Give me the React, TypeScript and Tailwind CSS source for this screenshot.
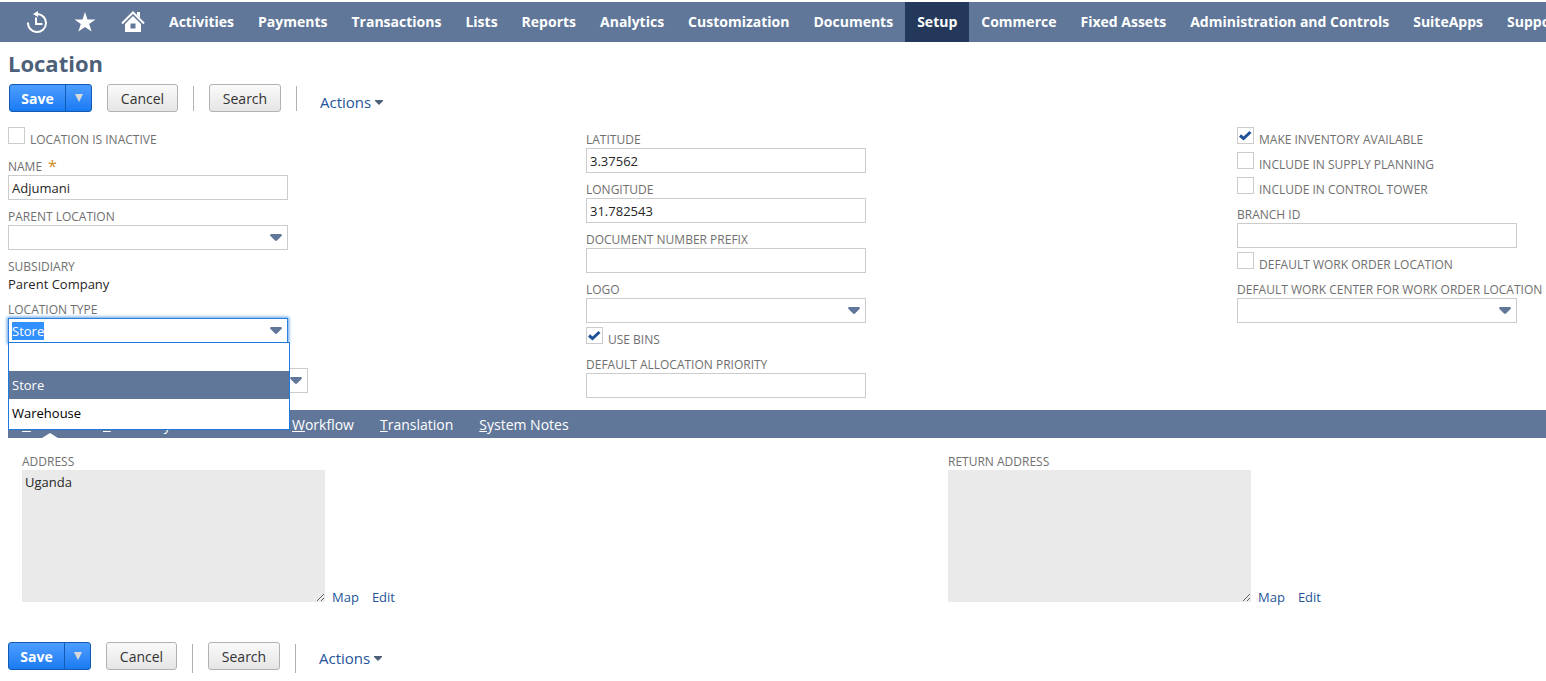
import React, { useEffect, useRef, useState } from 'react';

const NAV_ITEMS = [
    'Activities',
    'Payments',
    'Transactions',
    'Lists',
    'Reports',
    'Analytics',
    'Customization',
    'Documents',
    'Setup',
    'Commerce',
    'Fixed Assets',
    'Administration and Controls',
    'SuiteApps',
    'Support',
];

const TABS = [
    { label: 'Address', width: 'w-[55px]' },
    { label: 'Subsidiary Restrictions', width: 'w-[163px]' },
    { label: 'Workflow', width: '' },
    { label: 'Translation', width: '' },
    { label: 'System Notes', width: '' },
];

const HistoryIcon = () => (
    <svg width="22" height="22" viewBox="0 0 22 22" fill="none" stroke="#fff" strokeWidth="2">
        <path d="M2 11.500a9 9 0 1 0 9.500-8.500" />
        <path d="M7 3 12 0v6z" fill="#fff" stroke="none" />
        <path d="M10 6.500V13H16.500" />
    </svg>
);

const StarIcon = () => (
    <svg width="22" height="22" viewBox="0 0 22 22" fill="#fff">
        <path d="M11 1l2.500 7.400h8l-6.300 4.600 2.400 7.500L11 16l-6.600 4.500 2.400-7.500L.5 8.400h8z" />
    </svg>
);

const HomeIcon = () => (
    <svg width="24" height="22" viewBox="0 0 24 22">
        <path d="M1 12.500 12 1.500l11 11" fill="none" stroke="#fff" strokeWidth="2" />
        <path d="M16 1h3v6l-3-3z" fill="#fff" />
        <path d="M12 5l8 8v8H4v-8zM9.500 12.500v5h5v-5z" fill="#fff" fillRule="evenodd" />
    </svg>
);

const DropArrow = () => (
    <svg width="12" height="8" viewBox="0 0 12 8" className="pointer-events-none absolute right-1.5 top-[9px]" fill="#607799">
        <path d="M1 0h10q1.500.8.5 2L7 6.500q-1 .8-2 0L.5 2Q-.5.8 1 0z" />
    </svg>
);

interface FieldProps {
    id: string;
    label: string;
    required?: boolean;
    children: React.ReactNode;
}

const Field: React.FC<FieldProps> = ({ id, label, required, children }) => (
    <div className="mb-1">
        <label
            htmlFor={id}
            className={`flex items-end whitespace-nowrap text-xs leading-4 text-[#6f6f6f] ${required ? 'h-[23px]' : 'h-[21px]'}`}
        >
            {label}
            {required && <span className="ml-1.5 text-base leading-[18px] text-[#cf8a1d]">*</span>}
        </label>
        {children}
    </div>
);

const TextField = ({ id, label, value = '', required }: { id: string; label: string; value?: string; required?: boolean }) => (
    <Field id={id} label={label} required={required}>
        <input
            id={id}
            type="text"
            defaultValue={value}
            className="block h-[25px] w-[280px] border border-[#ccc] bg-white px-[3px] text-[13px] text-[#262626] outline-none"
        />
    </Field>
);

const SelectField = ({ id, label, wide }: { id: string; label: string; wide?: boolean }) => (
    <Field id={id} label={label}>
        <div className={`relative ${wide ? 'w-[300px]' : 'w-[280px]'}`}>
            <select id={id} className="block h-[25px] w-full appearance-none border border-[#ccc] bg-white px-[3px] text-[13px] outline-none">
                <option></option>
            </select>
            <DropArrow />
        </div>
    </Field>
);

const CheckField = ({ id, label, checked = false }: { id: string; label: string; checked?: boolean }) => (
    <div className="flex h-[25px] items-start">
        <span className="relative size-[17px]">
            <input
                id={id}
                type="checkbox"
                defaultChecked={checked}
                className="peer block size-[17px] appearance-none border border-[#ccc] bg-white"
            />
            <svg
                width="13"
                height="11"
                viewBox="0 0 13 11"
                className="pointer-events-none absolute left-0.5 top-[3px] hidden peer-checked:block"
                fill="none"
                stroke="#1f5297"
                strokeWidth="3"
            >
                <path d="M1 5.500 4.500 8.500 11.500 2" />
            </svg>
        </span>
        <label htmlFor={id} className="ml-[5px] mt-[5px] whitespace-nowrap text-xs leading-4 text-[#6f6f6f]">
            {label}
        </label>
    </div>
);

const LocationTypeField = () => {
    const inputRef = useRef<HTMLInputElement>(null);
    const [value, setValue] = useState('Store');

    useEffect(() => {
        inputRef.current?.focus({ preventScroll: true });
        inputRef.current?.select();
    }, []);

    return (
        <Field id="locationType" label="LOCATION TYPE">
            <div className="relative w-[280px]">
                <input
                    ref={inputRef}
                    id="locationType"
                    type="text"
                    role="combobox"
                    aria-expanded="true"
                    aria-controls="locationTypeList"
                    value={value}
                    onChange={(e) => setValue(e.target.value)}
                    className="block h-[25px] w-full border border-[#2f80dc] bg-white px-[3px] text-[13px] text-[#262626] shadow-[0_0_3px_1px_#5a9fe8] outline-none selection:bg-[#3390ff] selection:text-white"
                />
                <DropArrow />
                <ul
                    id="locationTypeList"
                    role="listbox"
                    className="absolute left-0 top-6 z-10 w-[282px] border border-[#1f7ae0] bg-white pb-0.5 text-[13px] leading-7 text-black"
                >
                    {['', 'Store', 'Warehouse'].map((option) => (
                        <li
                            key={option}
                            role="option"
                            aria-selected={option === value}
                            onClick={() => setValue(option)}
                            className={`h-7 px-[3px] ${option === value ? 'bg-[#607799] text-white' : ''}`}
                        >
                            {option}
                        </li>
                    ))}
                </ul>
            </div>
        </Field>
    );
};

const grayButton =
    'h-7 rounded-[3px] border border-[#b2b2b2] bg-linear-to-b from-[#fafafa] to-[#e5e5e5] pt-0.5 text-sm font-medium text-[#333]';

const Toolbar = ({ bottom }: { bottom?: boolean }) => (
    <div className={`flex items-start ${bottom ? 'pl-2' : 'pl-[9px]'}`}>
        <div className="flex h-7 w-[83px] rounded-[3px] border border-[#125ab2] bg-linear-to-b from-[#4c9dff] to-[#187bf2] text-sm font-bold text-white">
            <button type="button" className="flex-1 pt-0.5">Save</button>
            <button type="button" aria-label="More save options" className="flex w-[26px] items-center justify-center border-l border-[#125ab2]">
                <svg width="8" height="8" viewBox="0 0 8 8" fill="#d9d9d9">
                    <path d="M0 0h8L4 8z" />
                </svg>
            </button>
        </div>
        <button type="button" className={`ml-[15px] w-[71px] ${grayButton}`}>Cancel</button>
        <span className={`ml-[15px] mt-0.5 w-px bg-[#b2b2b2] ${bottom ? 'h-[29px]' : 'h-[25px]'}`} />
        <button type="button" className={`ml-[15px] w-[72px] ${grayButton}`}>Search</button>
        <span className={`ml-[15px] mt-0.5 w-px bg-[#b2b2b2] ${bottom ? 'h-[29px]' : 'h-[25px]'}`} />
        <button
            type="button"
            className={`-mb-1 ml-[23px] flex items-center gap-1 text-[15px] leading-5 font-medium text-[#255599] ${bottom ? 'mt-1.5' : 'mt-2'}`}
        >
            Actions
            <svg width="8" height="5" viewBox="0 0 8 5" fill="#4d5f79">
                <path d="M0 0h8v1L4 5 0 1z" />
            </svg>
        </button>
    </div>
);

const AddressBox = ({ id, label, value = '' }: { id: string; label: string; value?: string }) => (
    <div>
        <label htmlFor={id} className="block pt-0.5 text-xs leading-4 text-[#6f6f6f]">{label}</label>
        <div className="flex items-end text-[13px] leading-[18px] text-[#255599]">
            <textarea
                id={id}
                readOnly
                defaultValue={value}
                className="block h-[132px] w-[303px] bg-[#eaeaea] px-[3px] py-[3px] text-[#262626] outline-none"
            />
            <a href="#map" className="ml-[7px] -mb-1">Map</a>
            <a href="#edit" className="ml-[13px] -mb-1">Edit</a>
        </div>
    </div>
);

export default function App() {
    return (
        <div className="overflow-hidden bg-white pt-0.5 pb-2 font-['Open_Sans',sans-serif]">
            {/* Main navigation */}
            <nav className="flex h-10 items-stretch overflow-hidden bg-[#607799] pl-[13px] text-sm font-bold text-white">
                <a href="#recent" aria-label="Recent records" className="flex w-12 shrink-0 items-center justify-center"><HistoryIcon /></a>
                <a href="#shortcuts" aria-label="Shortcuts" className="flex w-12 shrink-0 items-center justify-center"><StarIcon /></a>
                <a href="#home" aria-label="Home" className="flex w-12 shrink-0 items-center justify-center"><HomeIcon /></a>
                {NAV_ITEMS.map((item) => (
                    <a
                        key={item}
                        href="#nav"
                        className={`flex shrink-0 items-center whitespace-nowrap px-3 ${item === 'Setup' ? 'bg-[#24385b]' : ''}`}
                    >
                        {item}
                    </a>
                ))}
            </nav>

            <h1 className="mt-1.5 mb-1.5 pl-2 text-[22px] leading-[30px] font-bold text-[#4d5f79]">Location</h1>
            <Toolbar />

            {/* Primary fields */}
            <form className="mt-[15px] grid grid-cols-[578fr_651fr_309fr] pl-2">
                <div className="min-w-0">
                    <CheckField id="inactive" label="LOCATION IS INACTIVE" />
                    <TextField id="name" label="NAME" value="Adjumani" required />
                    <SelectField id="parent" label="PARENT LOCATION" />
                    <div className="mb-1">
                        <p className="pt-[5px] text-xs leading-4 text-[#6f6f6f]">SUBSIDIARY</p>
                        <p className="text-[13px] leading-[18px] text-[#262626]">Parent Company</p>
                    </div>
                    <LocationTypeField />
                    <SelectField id="timeZone" label="TIME ZONE" wide />
                </div>
                <div className="min-w-0">
                    <TextField id="latitude" label="LATITUDE" value="3.37562" />
                    <TextField id="longitude" label="LONGITUDE" value="31.782543" />
                    <TextField id="prefix" label="DOCUMENT NUMBER PREFIX" />
                    <SelectField id="logo" label="LOGO" />
                    <CheckField id="useBins" label="USE BINS" checked />
                    <TextField id="priority" label="DEFAULT ALLOCATION PRIORITY" />
                </div>
                <div className="min-w-0">
                    <CheckField id="available" label="MAKE INVENTORY AVAILABLE" checked />
                    <CheckField id="supply" label="INCLUDE IN SUPPLY PLANNING" />
                    <CheckField id="tower" label="INCLUDE IN CONTROL TOWER" />
                    <TextField id="branch" label="BRANCH ID" />
                    <CheckField id="workOrder" label="DEFAULT WORK ORDER LOCATION" />
                    <SelectField id="workCenter" label="DEFAULT WORK CENTER FOR WORK ORDER LOCATION" />
                </div>
            </form>

            {/* Subtabs */}
            <div role="tablist" className="mt-2 ml-2 flex h-7 gap-[26px] bg-[#607799] pl-3.5 text-sm leading-[30px] text-white">
                {TABS.map(({ label, width }, index) => (
                    <button
                        key={label}
                        type="button"
                        role="tab"
                        aria-selected={index === 0}
                        className={`relative h-7 text-left whitespace-nowrap ${width}`}
                    >
                        <span className="underline">{label[0]}</span>
                        {label.slice(1)}
                        {index === 0 && (
                            <svg width="16" height="5" viewBox="0 0 16 5" className="absolute bottom-0 left-5" fill="#fff">
                                <path d="M0 5 8 0l8 5z" />
                            </svg>
                        )}
                    </button>
                ))}
            </div>

            <div className="mt-3.5 ml-[22px] grid grid-cols-[926fr_598fr]">
                <AddressBox id="address" label="ADDRESS" value="Uganda" />
                <AddressBox id="returnAddress" label="RETURN ADDRESS" />
            </div>

            <div className="mt-10">
                <Toolbar bottom />
            </div>
        </div>
    );
}
